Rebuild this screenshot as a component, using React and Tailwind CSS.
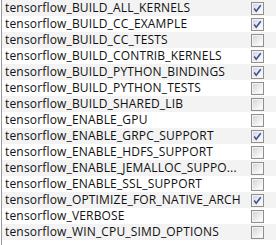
import React from 'react';

const rows = [
  ['tensorflow_BUILD_ALL_KERNELS', true],
  ['tensorflow_BUILD_CC_EXAMPLE', true],
  ['tensorflow_BUILD_CC_TESTS', false],
  ['tensorflow_BUILD_CONTRIB_KERNELS', true],
  ['tensorflow_BUILD_PYTHON_BINDINGS', true],
  ['tensorflow_BUILD_PYTHON_TESTS', false],
  ['tensorflow_BUILD_SHARED_LIB', false],
  ['tensorflow_ENABLE_GPU', false],
  ['tensorflow_ENABLE_GRPC_SUPPORT', true],
  ['tensorflow_ENABLE_HDFS_SUPPORT', false],
  ['tensorflow_ENABLE_JEMALLOC_SUPPO...', false],
  ['tensorflow_ENABLE_SSL_SUPPORT', false],
  ['tensorflow_OPTIMIZE_FOR_NATIVE_ARCH', true],
  ['tensorflow_VERBOSE', false],
  ['tensorflow_WIN_CPU_SIMD_OPTIONS', false],
];

const CheckBox = ({ checked }) => (
  <svg width="13" height="13" viewBox="0 0 13 13" className="block">
    <defs>
      <linearGradient id="cbg" x1="0" y1="0" x2="1" y2="1">
        <stop offset="0" stopColor="#d6d6d6" />
        <stop offset="1" stopColor="#ffffff" />
      </linearGradient>
    </defs>
    <rect x="0.5" y="0.5" width="12" height="12" fill="#f4f4f4" stroke="#8e8f8f" />
    <rect x="2" y="2" width="9" height="9" fill="url(#cbg)" />
    {checked && (
      <path d="M3.2 6.6 L5.2 9.2 L9.8 3.2" fill="none" stroke="#3d52a0" strokeWidth="1.6" />
    )}
  </svg>
);

export default function App() {
  return (
    <div className="w-[276px] h-[245px] bg-white pl-px overflow-hidden">
      <div className="border-l border-[#9a9a9a] h-full">
        {rows.map(([name, checked], i) => (
          <div
            key={name}
            className={`flex items-center h-4 ${i % 2 === 0 ? 'bg-[#f3f3f3]' : 'bg-white'}`}
          >
            <div className="w-[244px] pl-[3px] truncate text-[12px] leading-4 tracking-[0.17px] text-[#111] font-['Open_Sans',sans-serif]">
              {name}
            </div>
            <div className="flex-1 flex justify-start pl-[5px]">
              <CheckBox checked={checked} />
            </div>
          </div>
        ))}
      </div>
    </div>
  );
}
